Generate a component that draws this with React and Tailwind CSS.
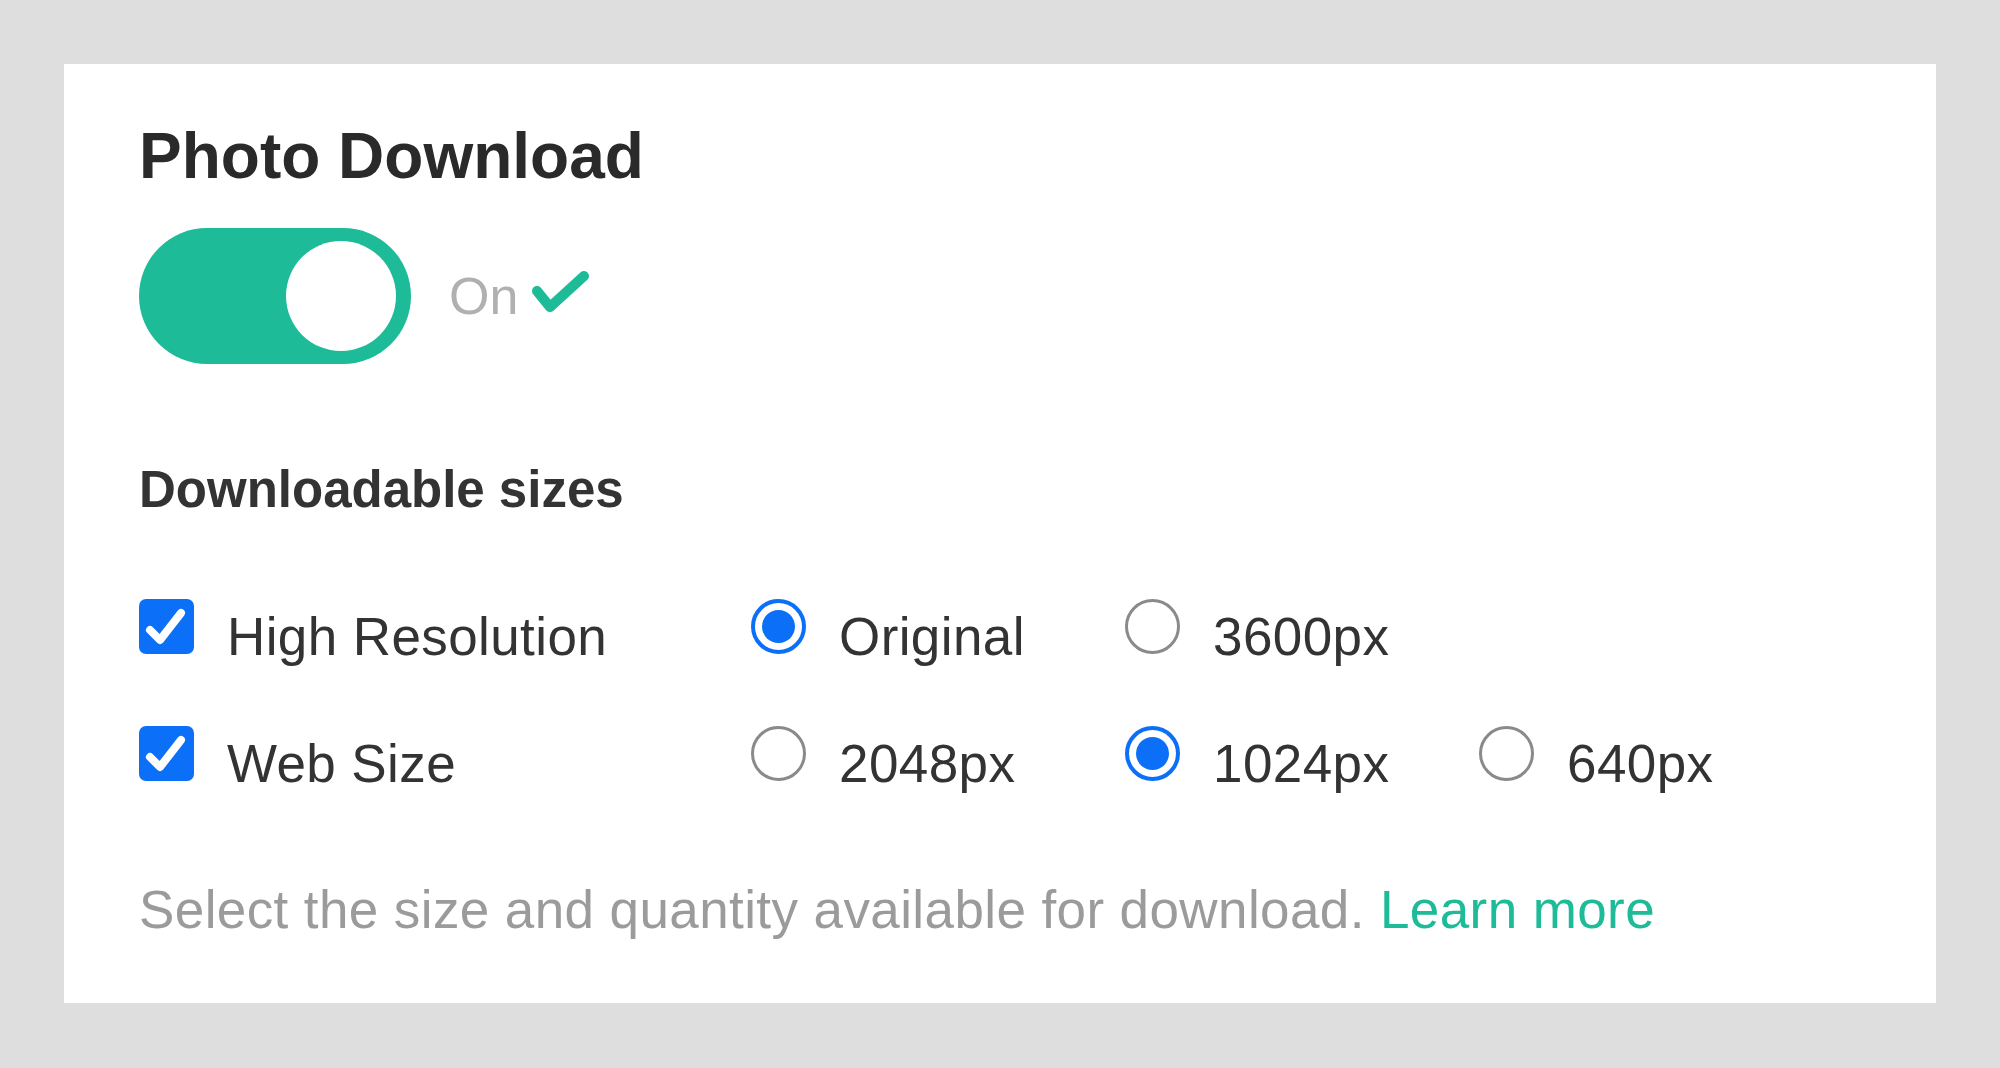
import React, { useState } from 'react';

const TEAL = 'bg-[#1dbb97]';

// checkbox azul con la palomita blanca
const CheckBox = ({ checked, onChange }) => (
    <button
        onClick={onChange}
        className={`w-[55px] h-[55px] shrink-0 rounded-[7px] flex items-center justify-center ${checked ? 'bg-[#0b70f7]' : 'bg-white border-[3px] border-[#8a8a8a]'}`}
    >
        {checked && (
            <svg width="55" height="55" viewBox="0 0 55 55">
                <path d="M11 31 L21 41 L42 14" fill="none" stroke="white" strokeWidth="8" strokeLinecap="round" strokeLinejoin="round" />
            </svg>
        )}
    </button>
);

const Radio = ({ checked, onChange }) => (
    <button
        onClick={onChange}
        className={`w-[55px] h-[55px] shrink-0 rounded-full flex items-center justify-center bg-white ${checked ? 'border-[4px] border-[#0b70f7]' : 'border-[3px] border-[#8a8a8a]'}`}
    >
        {checked && <span className="w-[33px] h-[33px] rounded-full bg-[#0b70f7]"></span>}
    </button>
);

const Label = ({ children }) => (
    <span className="ml-[33px] mt-[11px] text-[53px] leading-[53px] tracking-[0.4px] text-[#333333] whitespace-nowrap">{children}</span>
);

const App = () => {
    const [enabled, setEnabled] = useState(true);
    const [high, setHigh] = useState(true);
    const [web, setWeb] = useState(true);
    const [highSize, setHighSize] = useState('original');
    const [webSize, setWebSize] = useState('1024');

    return (
        <div className="min-h-screen bg-[#dedede] pt-[64px] pl-[64px]" style={{ fontFamily: '"Liberation Sans", Arial, sans-serif' }}>
            <div className="w-[1872px] bg-white pt-[60px] pl-[75px] pb-[67px]">

                {/* Titulo */}
                <h1 className="text-[64px] leading-[64px] font-bold text-[#2a2a2a]">Photo Download</h1>

                {/* Switch */}
                <div className="mt-[40px] flex items-center">
                    <button
                        onClick={() => setEnabled(!enabled)}
                        className={`w-[272px] h-[136px] rounded-full flex items-center px-[15px] ${enabled ? `${TEAL} justify-end` : 'bg-[#cccccc] justify-start'}`}
                    >
                        <span className="w-[110px] h-[110px] rounded-full bg-white"></span>
                    </button>
                    <span className="ml-[38px] text-[52px] leading-[52px] text-[#b0b0b0]">{enabled ? 'On' : 'Off'}</span>
                    {enabled && (
                        <svg className="ml-[14px] mb-[8px]" width="58" height="42" viewBox="0 0 58 42">
                            <path d="M5 20 L18 36 L52 5" fill="none" stroke="#1dbb97" strokeWidth="10" strokeLinecap="round" strokeLinejoin="round" />
                        </svg>
                    )}
                </div>

                {/* Tamaños */}
                <h2 className="mt-[100px] text-[51px] leading-[51px] font-bold text-[#333333]">Downloadable sizes</h2>

                <div className="mt-[84px] grid grid-cols-[612px_374px_354px_auto]">
                    <div className="flex items-start h-[64px]">
                        <CheckBox checked={high} onChange={() => setHigh(!high)} />
                        <Label>High Resolution</Label>
                    </div>
                    <div className="flex items-start">
                        <Radio checked={highSize === 'original'} onChange={() => setHighSize('original')} />
                        <Label>Original</Label>
                    </div>
                    <div className="flex items-start">
                        <Radio checked={highSize === '3600'} onChange={() => setHighSize('3600')} />
                        <Label>3600px</Label>
                    </div>
                    <div></div>
                </div>

                <div className="mt-[63px] grid grid-cols-[612px_374px_354px_auto]">
                    <div className="flex items-start h-[64px]">
                        <CheckBox checked={web} onChange={() => setWeb(!web)} />
                        <Label>Web Size</Label>
                    </div>
                    <div className="flex items-start">
                        <Radio checked={webSize === '2048'} onChange={() => setWebSize('2048')} />
                        <Label>2048px</Label>
                    </div>
                    <div className="flex items-start">
                        <Radio checked={webSize === '1024'} onChange={() => setWebSize('1024')} />
                        <Label>1024px</Label>
                    </div>
                    <div className="flex items-start">
                        <Radio checked={webSize === '640'} onChange={() => setWebSize('640')} />
                        <Label>640px</Label>
                    </div>
                </div>

                {/* Nota */}
                <p className="mt-[93px] text-[53px] leading-[53px] tracking-[0.4px] text-[#9b9b9b] whitespace-nowrap">
                    Select the size and quantity available for download. <a href="#" className="text-[#1dbb97]">Learn more</a>
                </p>
            </div>
        </div>
    );
};

export default App;
